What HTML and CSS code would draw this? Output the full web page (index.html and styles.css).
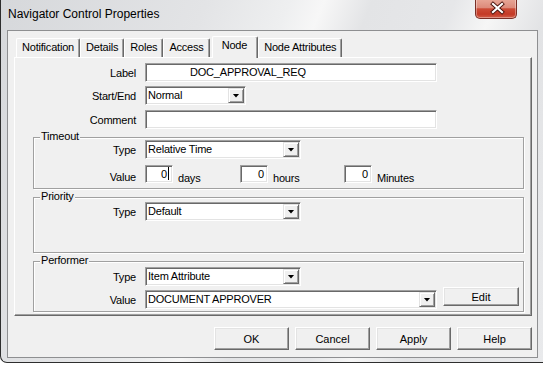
FILE: index.html
```html
<!DOCTYPE html>
<html lang="en">
  <head>
    <meta charset="UTF-8" />
    <title>Navigator Control Properties</title>
    <link rel="stylesheet" href="styles.css">
  </head>
  <body>
    <div class="window">
      <div class="titlebar">
        <span class="title">Navigator Control Properties</span>
        <div class="close">
          <svg width="43" height="19" viewBox="0 0 43 19">
            <path d="M17 5 L26 13 M26 5 L17 13" stroke="#4a120b" stroke-width="4" stroke-linecap="square" />
            <path d="M17 5 L26 13 M26 5 L17 13" stroke="#fff" stroke-width="2.2" stroke-linecap="square" />
          </svg>
        </div>
      </div>

      <div class="client">
        <div class="tabs">
          <div class="tab">Notification</div>
          <div class="tab">Details</div>
          <div class="tab">Roles</div>
          <div class="tab">Access</div>
          <div class="tab active">Node</div>
          <div class="tab">Node Attributes</div>
        </div>

        <div class="panel">
          <div class="row">
            <span class="label">Label</span>
            <div class="edit wide label-text">DOC_APPROVAL_REQ</div>
          </div>
          <div class="row gap-4">
            <span class="label">Start/End</span>
            <div class="combo short">
              <span class="combo-text">Normal</span>
              <span class="drop"></span>
            </div>
          </div>
          <div class="row gap-5">
            <span class="label">Comment</span>
            <div class="edit wide"></div>
          </div>

          <div class="group timeout">
            <span class="legend">Timeout</span>
            <div class="row">
              <span class="label">Type</span>
              <div class="combo mid">
                <span class="combo-text">Relative Time</span>
                <span class="drop"></span>
              </div>
            </div>
            <div class="row value-row">
              <span class="label">Value</span>
              <div class="time days">
                <div class="edit num">0<span class="caret"></span></div>
                <span class="unit">days</span>
              </div>
              <div class="time hours">
                <div class="edit num">0</div>
                <span class="unit">hours</span>
              </div>
              <div class="time">
                <div class="edit num">0</div>
                <span class="unit">Minutes</span>
              </div>
            </div>
          </div>

          <div class="group priority">
            <span class="legend">Priority</span>
            <div class="row">
              <span class="label">Type</span>
              <div class="combo mid">
                <span class="combo-text">Default</span>
                <span class="drop"></span>
              </div>
            </div>
          </div>

          <div class="group performer">
            <span class="legend">Performer</span>
            <div class="row">
              <span class="label">Type</span>
              <div class="combo mid">
                <span class="combo-text">Item Attribute</span>
                <span class="drop"></span>
              </div>
            </div>
            <div class="row gap-4">
              <span class="label">Value</span>
              <div class="combo wide">
                <span class="combo-text">DOCUMENT APPROVER</span>
                <span class="drop"></span>
              </div>
              <button class="btn edit-btn">Edit</button>
            </div>
          </div>
        </div>

        <div class="buttons">
          <button class="btn">OK</button>
          <button class="btn">Cancel</button>
          <button class="btn">Apply</button>
          <button class="btn">Help</button>
        </div>
      </div>
    </div>
  </body>
</html>
```

FILE: styles.css
```css
* {
  box-sizing: border-box;
}
body {
  margin: 0;
  width: 543px;
  height: 366px;
  overflow: hidden;
  background-color: #fff;
  font-family: "Liberation Sans", Arial, sans-serif;
  font-size: 11px;
  color: #000;
}

/* window frame */
.window {
  width: 543px;
  height: 363px;
  display: flex;
  flex-direction: column;
  padding: 0 5px 4px 6px;
  border-left: 1px solid #2e2e2e;
  border-bottom: 1px solid #2e2e2e;
  border-bottom-left-radius: 7px;
  background-color: #e4e5e7;
  background-image: linear-gradient(
    112deg,
    #d6d8db 0%,
    #e3e4e6 30%,
    #eeeff0 42%,
    #f7f7f7 47%,
    #e3e4e6 54%,
    #e6e7e9 66%,
    #f6f6f6 72%,
    #e2e3e5 80%,
    #e9eaec 100%
  );
}
.titlebar {
  height: 30px;
  display: flex;
  justify-content: space-between;
  align-items: flex-start;
}
.title {
  margin: 7px 0 0 1px;
  font-size: 12px;
  line-height: 15px;
}
.close {
  width: 42px;
  height: 20px;
  margin-right: 21px;
  margin-top: -1px;
  border: 1px solid #7a2f26;
  border-top: none;
  border-radius: 0 0 5px 5px;
  background-image: linear-gradient(
    #e8a898 0%,
    #dd8b7b 45%,
    #cc4b36 52%,
    #c43a26 80%,
    #d25e48 100%
  );
  box-shadow: inset 0 0 0 1px rgba(255, 255, 255, 0.35);
}
.close svg {
  display: block;
}

/* client area */
.client {
  flex: 1;
  display: flex;
  flex-direction: column;
  padding: 5px 5px 7px 6px;
  border: 1px solid #8e8f91;
  background-color: #f0f0f0;
  letter-spacing: -0.2px;
}

/* tabs */
.tabs {
  height: 21px;
  display: flex;
  align-items: flex-end;
  padding-left: 2px;
}
.tab {
  height: 19px;
  padding: 0 5px;
  line-height: 17px;
  border: 1px solid;
  border-color: #fff #696969 transparent #fff;
  border-bottom: none;
  border-radius: 2px 2px 0 0;
  box-shadow: inset -1px 0 #a0a0a0;
  background-color: #f0f0f0;
  white-space: nowrap;
}
.tab.active {
  position: relative;
  z-index: 1;
  height: 22px;
  margin: 0 0 -1px 2px;
  padding: 0 10px 2px 9px;
  line-height: 17px;
}

.panel {
  display: flex;
  flex-direction: column;
  padding: 5px 7px 3px 18px;
  border: 1px solid;
  border-color: #fff #696969 #696969 #fff;
  box-shadow: inset -1px -1px #a0a0a0;
}

/* form rows */
.row {
  height: 19px;
  display: flex;
  align-items: center;
}
.gap-4 {
  margin-top: 4px;
}
.gap-5 {
  margin-top: 5px;
}
.label {
  width: 103px;
  margin-right: 9px;
  text-align: right;
  white-space: nowrap;
}
.group .label {
  width: 102px;
}

.edit {
  height: 19px;
  padding: 0 2px;
  line-height: 17px;
  border: 1px solid;
  border-color: #a0a0a0 #fff #fff #a0a0a0;
  box-shadow: inset 1px 1px #696969, inset -1px -1px #e3e3e3;
  background-color: #fff;
  white-space: nowrap;
}
.wide {
  width: 292px;
}
.short {
  width: 101px;
}
.mid {
  width: 156px;
}
.label-text {
  padding-left: 44px;
}

.combo {
  height: 19px;
  display: flex;
  border: 1px solid;
  border-color: #a0a0a0 #fff #fff #a0a0a0;
  box-shadow: inset 1px 1px #696969, inset -1px -1px #e3e3e3;
  background-color: #fff;
}
.combo-text {
  flex: 1;
  padding-left: 2px;
  line-height: 17px;
  white-space: nowrap;
}
.drop {
  width: 16px;
  margin: 1px 1px 1px 0;
  display: flex;
  align-items: center;
  justify-content: center;
  border: 1px solid;
  border-color: #e3e3e3 #696969 #696969 #e3e3e3;
  box-shadow: inset 1px 1px #fff, inset -1px -1px #a0a0a0;
  background-color: #f0f0f0;
}
.drop::after {
  content: "";
  width: 7px;
  height: 4px;
  background-color: #000;
  clip-path: polygon(0 0, 100% 0, 50% 100%);
}

/* group boxes */
.group {
  position: relative;
  margin-top: 8px;
  border: 1px solid #a0a0a0;
  box-shadow: inset 1px 1px #fff, 1px 1px #fff;
}
.legend {
  position: absolute;
  top: -8px;
  left: 6px;
  padding: 0 1px;
  line-height: 13px;
  background-color: #f0f0f0;
}
.timeout {
  padding: 2px 0 5px;
}
.priority {
  padding: 4px 0 31px;
}
.performer {
  padding: 5px 0 2px;
}

.value-row {
  height: 18px;
  margin-top: 6px;
  align-items: flex-end;
}
.time {
  display: flex;
  align-items: flex-end;
}
.time.days {
  width: 95px;
}
.time.hours {
  width: 104px;
}
.num {
  width: 28px;
  height: 18px;
  padding-right: 3px;
  line-height: 16px;
  text-align: right;
}
.caret {
  display: inline-block;
  width: 1px;
  height: 13px;
  margin-left: 1px;
  vertical-align: -2px;
  background-color: #000;
}
.unit {
  margin: 0 0 -2px 5px;
  line-height: 14px;
}

/* buttons */
.btn {
  width: 75px;
  height: 23px;
  padding: 0;
  font: inherit;
  color: #000;
  border: 1px solid;
  border-color: #fff #696969 #696969 #fff;
  box-shadow: inset -1px -1px #a0a0a0, inset 1px 1px #e3e3e3;
  background-color: #f0f0f0;
}
.edit-btn {
  width: 76px;
  height: 19px;
  margin-left: 6px;
  align-self: flex-start;
  margin-top: -3px;
}
.buttons {
  display: flex;
  justify-content: flex-end;
  gap: 6px;
  margin-top: 11px;
}
```
